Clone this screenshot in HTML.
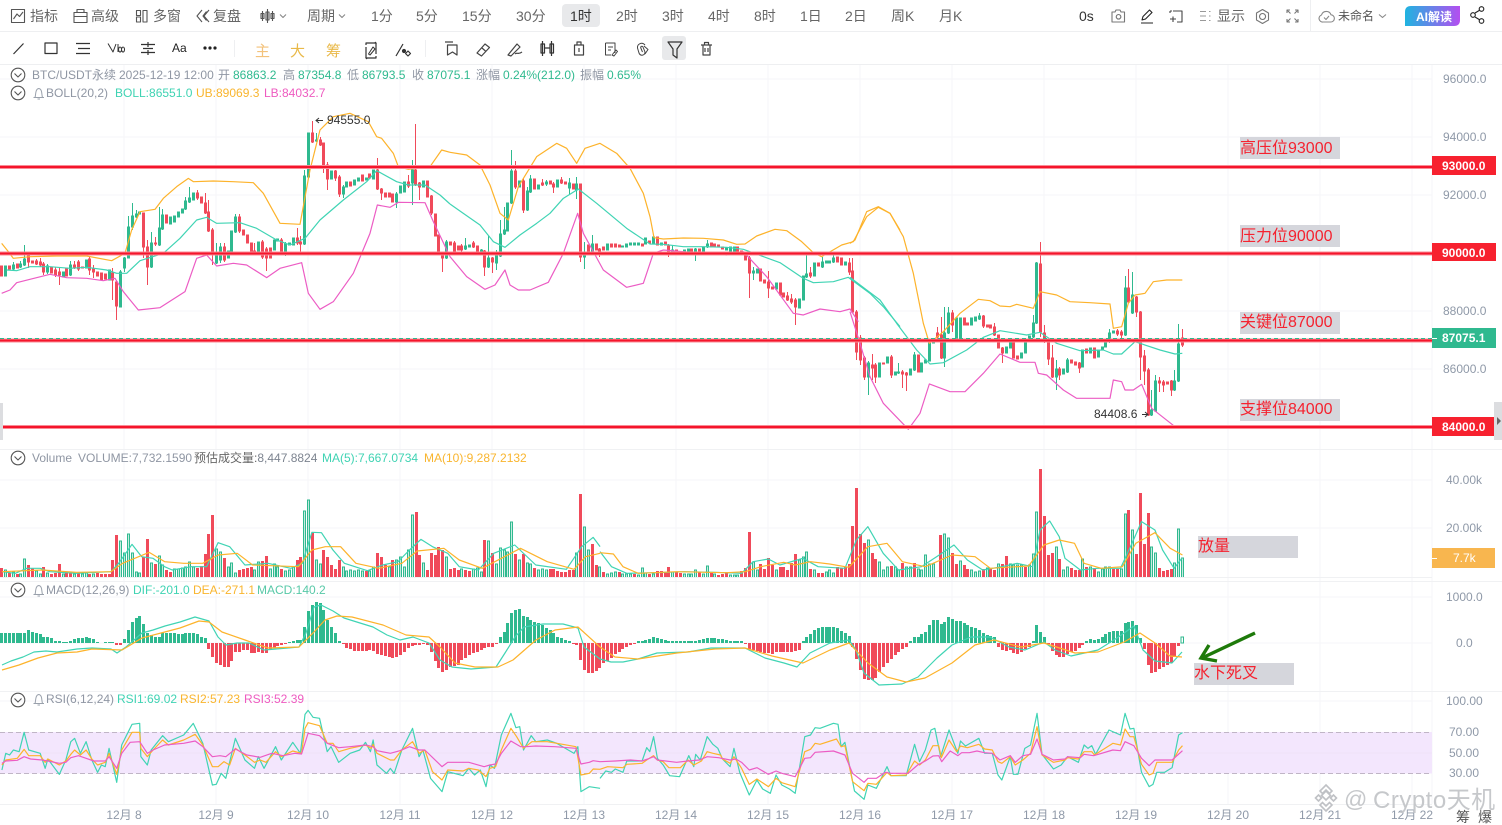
<!DOCTYPE html>
<html lang="zh"><head><meta charset="utf-8"><title>BTC/USDT</title>
<style>
html,body{margin:0;padding:0;background:#fff;width:1502px;height:825px;overflow:hidden}
svg{display:block;font-family:"Liberation Sans","Noto Sans CJK SC",sans-serif;font-size:12px}
.l{fill:none;stroke-width:1.2;vector-effect:non-scaling-stroke;stroke-linejoin:round}
.t{stroke:#40d4b4}.o{stroke:#fdb32b}.p{stroke:#ec5cc4}
.g{fill:#2fb98f;stroke:#2fb98f;stroke-width:1}.r{fill:#f04a5a;stroke:#f04a5a;stroke-width:1}
.i{fill:none;stroke:#555;stroke-width:1.1;stroke-linejoin:round}
.d{fill:none;stroke:#333;stroke-width:1.2;stroke-linejoin:round}
.c{fill:#666;font-size:14px}.m{fill:#8f96a3}.a{fill:#8f99a8}
.tg{fill:#2fb98f}.tt{fill:#3fd3b3}.to{fill:#f9b52e}.tp{fill:#ee5bc0}
.n{fill:#f5222f;font-size:16px}.w{fill:#fff;font-weight:bold}
</style></head><body>
<svg width="1502" height="825" viewBox="0 0 1502 825" xmlns="http://www.w3.org/2000/svg">
<!-- grid -->
<path d="M0 79H1432M0 137H1432M0 195H1432M0 311H1432M0 369H1432M0 480H1432M0 528H1432M0 597H1432M0 643H1432M0 701H1432M124 65V804M216 65V804M308 65V804M400 65V804M492 65V804M584 65V804M676 65V804M768 65V804M860 65V804M952 65V804M1044 65V804M1136 65V804M1228 65V804M1320 65V804M1412 65V804M1432 65V804" stroke="#f5f6f8" fill="none"/>
<path d="M0 577.5H1432M0 581.5H1502M0 691.5H1502M0 804.5H1432M0 449.5H1502" stroke="#f0f1f3" fill="none"/>
<!-- RSI band -->
<rect x="0" y="732" width="1432" height="41.5" fill="#f3e6fd"/>
<path d="M0 753H1432" stroke="#efe2f8"/>
<path d="M0 732.5H1432M0 773.5H1432" stroke="#c0b5c6" stroke-dasharray="5 3" fill="none"/>
<!-- candles -->
<g>
<path class="r" d="M.5 266h2V276h-2z"/><path class="g" d="M4.5 266h2V276h-2z"/><path class="r" d="M8.5 266h2V269h-2z"/><path class="g" d="M12.5 265h2V269h-2zM13.5 262V271"/><path class="r" d="M16.5 264h2V268h-2z"/><path class="g" d="M19.5 264h2V267h-2zM20.5 261V268M23.5 259h2V265h-2zM24.5 245V266"/>
<path class="r" d="M27.5 254h2V262h-2zM28.5 252V268M31.5 261h2V263h-2zM35.5 261h2V264h-2zM36.5 259V265M39.5 262h2V265h-2zM40.5 258V267M42.5 264h2V272h-2zM43.5 262V275"/><path class="g" d="M46.5 266h2V272h-2zM47.5 264V274"/>
<path class="r" d="M50.5 267h2V273h-2zM54.5 270h2V275h-2zM55.5 267V277M58.5 272h2V275h-2zM59.5 268V285"/><path class="g" d="M62.5 272h2V277h-2z"/><path class="r" d="M65.5 268h2V276h-2z"/><path class="g" d="M69.5 265h2V275h-2zM70.5 261V276"/><path class="r" d="M73.5 265h2V268h-2zM74.5 261V269M77.5 262h2V269h-2zM78.5 260V271M81.5 267h2V268h-2z"/><path class="g" d="M85.5 260h2V268h-2z"/>
<path class="r" d="M88.5 259h2V270h-2zM89.5 257V275M92.5 269h2V272h-2zM93.5 265V278M96.5 272h2V276h-2zM100.5 273h2V280h-2zM104.5 274h2V279h-2z"/><path class="g" d="M108.5 270h2V280h-2z"/><path class="r" d="M111.5 273h2V280h-2zM112.5 268V300M115.5 282h2V306h-2zM116.5 280V320"/>
<path class="g" d="M119.5 272h2V307h-2zM120.5 270V307M123.5 258h2V268h-2zM124.5 257V272M127.5 227h2V258h-2zM128.5 216V258M131.5 216h2V227h-2zM132.5 203V230M135.5 214h2V217h-2zM136.5 210V218M138.5 212h2V214h-2z"/>
<path class="r" d="M142.5 213h2V247h-2zM143.5 213V258M146.5 247h2V267h-2zM147.5 240V285"/><path class="g" d="M150.5 243h2V267h-2zM151.5 232V268"/><path class="r" d="M154.5 243h2V244h-2zM155.5 237V246"/>
<path class="g" d="M158.5 228h2V245h-2zM159.5 207V246M161.5 215h2V229h-2zM162.5 209V230"/><path class="r" d="M165.5 215h2V223h-2z"/><path class="g" d="M169.5 217h2V224h-2zM173.5 216h2V222h-2zM177.5 212h2V217h-2zM181.5 209h2V213h-2zM184.5 201h2V209h-2zM185.5 197V210M188.5 198h2V202h-2zM189.5 187V203M192.5 193h2V200h-2z"/>
<path class="r" d="M196.5 193h2V198h-2zM197.5 190V200M200.5 197h2V203h-2zM204.5 203h2V213h-2zM205.5 193V214M207.5 212h2V231h-2zM208.5 200V232M211.5 230h2V255h-2zM212.5 228V265"/>
<path class="g" d="M215.5 253h2V263h-2zM216.5 243V264M219.5 247h2V260h-2zM220.5 243V263"/><path class="r" d="M223.5 247h2V260h-2zM224.5 243V262"/><path class="g" d="M227.5 251h2V258h-2zM230.5 231h2V252h-2zM234.5 217h2V232h-2zM235.5 214V233"/><path class="r" d="M238.5 217h2V231h-2zM239.5 214V233M242.5 230h2V235h-2zM246.5 235h2V243h-2zM250.5 243h2V253h-2zM253.5 251h2V253h-2zM254.5 243V255"/><path class="g" d="M257.5 242h2V253h-2z"/><path class="r" d="M261.5 242h2V257h-2zM262.5 240V259M265.5 249h2V258h-2zM266.5 247V271M269.5 248h2V258h-2z"/>
<path class="g" d="M273.5 240h2V250h-2zM276.5 239h2V241h-2z"/><path class="r" d="M280.5 240h2V251h-2zM281.5 238V253"/><path class="g" d="M284.5 244h2V252h-2zM285.5 242V256M288.5 243h2V245h-2zM292.5 238h2V245h-2z"/><path class="r" d="M296.5 238h2V243h-2zM297.5 228V245M299.5 242h2V244h-2zM300.5 236V253"/>
<path class="g" d="M303.5 176h2V244h-2zM304.5 170V245M307.5 133h2V177h-2z"/><path class="r" d="M311.5 133h2V142h-2zM312.5 121V143"/><path class="g" d="M315.5 140h2V141h-2zM316.5 133V142"/><path class="r" d="M319.5 140h2V145h-2zM320.5 137V146M322.5 143h2V165h-2zM323.5 143V173M326.5 165h2V179h-2zM327.5 162V190"/><path class="g" d="M330.5 171h2V179h-2z"/><path class="r" d="M334.5 171h2V178h-2zM335.5 170V181M338.5 177h2V194h-2zM339.5 175V197"/>
<path class="g" d="M342.5 187h2V194h-2zM343.5 185V198M345.5 182h2V187h-2z"/><path class="r" d="M349.5 182h2V186h-2z"/><path class="g" d="M353.5 180h2V185h-2zM357.5 178h2V181h-2z"/><path class="r" d="M361.5 175h2V181h-2z"/><path class="g" d="M365.5 178h2V180h-2z"/><path class="r" d="M368.5 174h2V178h-2z"/><path class="g" d="M372.5 170h2V179h-2z"/>
<path class="r" d="M376.5 170h2V189h-2zM377.5 158V190M380.5 189h2V193h-2zM381.5 188V200M384.5 193h2V197h-2zM388.5 193h2V197h-2zM391.5 194h2V202h-2z"/><path class="g" d="M395.5 194h2V202h-2zM396.5 192V208M399.5 186h2V193h-2zM403.5 182h2V192h-2z"/><path class="r" d="M407.5 182h2V186h-2zM408.5 175V188"/><path class="g" d="M411.5 170h2V183h-2zM412.5 160V205"/><path class="r" d="M414.5 170h2V185h-2zM415.5 124V186M418.5 183h2V187h-2zM419.5 182V200"/><path class="g" d="M422.5 181h2V187h-2z"/>
<path class="r" d="M426.5 181h2V197h-2zM430.5 196h2V213h-2zM431.5 195V215M434.5 214h2V236h-2zM437.5 235h2V253h-2zM441.5 253h2V258h-2zM442.5 252V272"/><path class="g" d="M445.5 242h2V258h-2zM446.5 240V259"/><path class="r" d="M449.5 242h2V245h-2zM453.5 243h2V253h-2zM454.5 241V255M457.5 246h2V250h-2zM460.5 246h2V250h-2zM461.5 244V254"/>
<path class="g" d="M464.5 246h2V249h-2zM465.5 238V250M468.5 245h2V247h-2z"/><path class="r" d="M472.5 243h2V247h-2zM473.5 241V248M476.5 246h2V253h-2z"/><path class="g" d="M480.5 250h2V253h-2zM481.5 249V255"/><path class="r" d="M483.5 251h2V267h-2zM484.5 250V276"/><path class="g" d="M487.5 258h2V267h-2zM488.5 236V268"/><path class="r" d="M491.5 258h2V262h-2zM492.5 257V273"/>
<path class="g" d="M495.5 254h2V263h-2zM496.5 250V270M499.5 234h2V256h-2zM500.5 220V257M503.5 230h2V234h-2zM504.5 207V235M506.5 203h2V231h-2zM510.5 171h2V203h-2zM511.5 150V204"/><path class="r" d="M514.5 171h2V187h-2zM515.5 161V189"/><path class="g" d="M518.5 181h2V187h-2z"/><path class="r" d="M522.5 181h2V210h-2zM523.5 178V213"/><path class="g" d="M526.5 191h2V210h-2zM527.5 187V211M529.5 179h2V192h-2zM530.5 175V193"/><path class="r" d="M533.5 179h2V189h-2z"/><path class="g" d="M537.5 185h2V189h-2z"/><path class="r" d="M541.5 183h2V185h-2zM542.5 179V186"/><path class="g" d="M545.5 182h2V184h-2zM546.5 180V186"/>
<path class="r" d="M549.5 181h2V184h-2zM552.5 184h2V187h-2zM553.5 182V193"/><path class="g" d="M556.5 180h2V187h-2z"/><path class="r" d="M560.5 180h2V183h-2zM561.5 177V184M564.5 182h2V184h-2z"/><path class="g" d="M568.5 183h2V188h-2zM569.5 178V194"/><path class="r" d="M572.5 184h2V189h-2z"/><path class="g" d="M575.5 184h2V190h-2zM576.5 177V199"/>
<path class="r" d="M579.5 184h2V257h-2zM580.5 184V262"/><path class="g" d="M583.5 253h2V257h-2zM584.5 242V269"/><path class="r" d="M587.5 245h2V252h-2z"/><path class="g" d="M591.5 244h2V252h-2zM592.5 235V253"/><path class="r" d="M595.5 244h2V250h-2zM598.5 249h2V251h-2zM599.5 248V257M602.5 247h2V250h-2z"/><path class="g" d="M606.5 244h2V250h-2z"/><path class="r" d="M610.5 244h2V247h-2zM614.5 244h2V247h-2zM618.5 245h2V247h-2z"/><path class="g" d="M621.5 246h2V247h-2zM625.5 244h2V247h-2zM629.5 243h2V245h-2zM633.5 243h2V245h-2zM637.5 243h2V245h-2z"/><path class="r" d="M641.5 244h2V246h-2z"/><path class="g" d="M644.5 238h2V244h-2z"/><path class="r" d="M648.5 241h2V243h-2z"/><path class="g" d="M652.5 237h2V243h-2z"/><path class="r" d="M656.5 237h2V245h-2z"/><path class="g" d="M660.5 243h2V245h-2z"/><path class="r" d="M664.5 242h2V245h-2zM667.5 246h2V254h-2zM668.5 244V257"/>
<path class="g" d="M671.5 250h2V253h-2zM672.5 245V254"/><path class="r" d="M675.5 250h2V253h-2zM679.5 252h2V253h-2z"/><path class="g" d="M683.5 250h2V253h-2zM687.5 249h2V252h-2z"/><path class="r" d="M690.5 249h2V252h-2z"/><path class="g" d="M694.5 249h2V252h-2zM695.5 248V261"/><path class="r" d="M698.5 249h2V252h-2z"/><path class="g" d="M702.5 247h2V252h-2zM706.5 244h2V247h-2zM707.5 240V248"/><path class="r" d="M710.5 243h2V247h-2zM713.5 244h2V247h-2zM717.5 245h2V247h-2zM721.5 247h2V249h-2z"/><path class="g" d="M725.5 248h2V250h-2zM729.5 247h2V251h-2zM733.5 247h2V251h-2z"/><path class="r" d="M736.5 247h2V252h-2zM740.5 251h2V253h-2zM744.5 253h2V260h-2zM748.5 258h2V273h-2zM749.5 256V298"/>
<path class="g" d="M752.5 271h2V273h-2zM753.5 267V280M756.5 269h2V273h-2z"/><path class="r" d="M759.5 269h2V281h-2zM763.5 280h2V283h-2zM767.5 282h2V288h-2zM768.5 271V298M771.5 287h2V289h-2z"/><path class="g" d="M775.5 283h2V289h-2z"/><path class="r" d="M779.5 283h2V295h-2zM782.5 293h2V297h-2zM786.5 296h2V300h-2zM787.5 292V301M790.5 299h2V302h-2zM791.5 294V304M794.5 300h2V307h-2zM795.5 298V325"/><path class="g" d="M798.5 299h2V308h-2zM802.5 276h2V300h-2zM805.5 274h2V277h-2zM806.5 254V278"/><path class="r" d="M809.5 273h2V276h-2zM810.5 267V278"/><path class="g" d="M813.5 263h2V276h-2z"/><path class="r" d="M817.5 263h2V266h-2z"/><path class="g" d="M821.5 262h2V267h-2zM822.5 257V268M825.5 261h2V263h-2zM828.5 261h2V263h-2zM832.5 258h2V262h-2zM833.5 254V263"/>
<path class="r" d="M836.5 257h2V262h-2zM840.5 258h2V265h-2z"/><path class="g" d="M844.5 262h2V265h-2z"/><path class="r" d="M848.5 263h2V272h-2zM849.5 258V275M851.5 271h2V312h-2zM852.5 258V313M855.5 312h2V352h-2zM856.5 310V360M859.5 338h2V360h-2zM860.5 335V365M863.5 358h2V377h-2zM864.5 356V380"/><path class="g" d="M867.5 363h2V377h-2zM868.5 361V395"/><path class="r" d="M871.5 365h2V368h-2zM872.5 354V380M874.5 365h2V377h-2zM875.5 363V383"/><path class="g" d="M878.5 363h2V377h-2z"/><path class="r" d="M882.5 363h2V364h-2z"/><path class="g" d="M886.5 357h2V363h-2z"/><path class="r" d="M890.5 357h2V375h-2zM891.5 355V378"/><path class="g" d="M894.5 372h2V375h-2zM897.5 372h2V373h-2zM898.5 363V374"/><path class="r" d="M901.5 372h2V374h-2zM902.5 370V388M905.5 373h2V375h-2zM906.5 372V391"/>
<path class="g" d="M909.5 369h2V375h-2zM913.5 355h2V370h-2zM914.5 352V371"/><path class="r" d="M917.5 355h2V372h-2z"/><path class="g" d="M920.5 363h2V372h-2zM924.5 360h2V363h-2zM928.5 343h2V361h-2zM932.5 342h2V343h-2z"/><path class="r" d="M936.5 333h2V337h-2zM937.5 327V339M940.5 335h2V358h-2zM941.5 317V359"/><path class="g" d="M943.5 333h2V358h-2zM944.5 307V367M947.5 313h2V333h-2zM948.5 307V334"/><path class="r" d="M951.5 313h2V325h-2zM952.5 310V332"/><path class="g" d="M955.5 318h2V338h-2zM959.5 318h2V338h-2z"/><path class="r" d="M963.5 318h2V325h-2zM966.5 323h2V325h-2z"/><path class="g" d="M970.5 318h2V325h-2zM974.5 317h2V321h-2zM978.5 316h2V319h-2zM979.5 313V320"/><path class="r" d="M982.5 316h2V326h-2zM983.5 315V328M986.5 325h2V327h-2zM989.5 325h2V328h-2zM993.5 327h2V335h-2zM994.5 323V336M997.5 335h2V348h-2zM1001.5 348h2V353h-2zM1002.5 347V363"/>
<path class="g" d="M1005.5 347h2V353h-2zM1009.5 340h2V348h-2z"/><path class="r" d="M1012.5 340h2V358h-2zM1016.5 356h2V359h-2z"/><path class="g" d="M1020.5 353h2V358h-2zM1024.5 341h2V353h-2zM1028.5 336h2V342h-2zM1032.5 323h2V337h-2zM1033.5 315V338M1035.5 263h2V323h-2zM1036.5 262V324"/><path class="r" d="M1039.5 264h2V332h-2zM1040.5 242V337M1043.5 333h2V342h-2zM1044.5 325V343M1047.5 339h2V359h-2zM1048.5 338V365M1051.5 358h2V377h-2zM1052.5 345V378"/><path class="g" d="M1055.5 369h2V377h-2zM1056.5 360V390"/><path class="r" d="M1058.5 369h2V375h-2zM1059.5 367V380"/><path class="g" d="M1062.5 369h2V374h-2zM1066.5 360h2V372h-2zM1067.5 358V373"/><path class="r" d="M1070.5 360h2V363h-2zM1074.5 362h2V365h-2zM1078.5 363h2V368h-2zM1079.5 362V373"/><path class="g" d="M1081.5 350h2V367h-2z"/><path class="r" d="M1085.5 349h2V353h-2z"/><path class="g" d="M1089.5 348h2V353h-2z"/><path class="r" d="M1093.5 348h2V358h-2z"/><path class="g" d="M1097.5 350h2V357h-2zM1101.5 347h2V350h-2zM1104.5 342h2V347h-2zM1108.5 333h2V342h-2zM1109.5 329V343M1112.5 331h2V333h-2z"/><path class="r" d="M1116.5 331h2V334h-2zM1117.5 329V336M1120.5 332h2V335h-2zM1121.5 330V338"/>
<path class="g" d="M1124.5 288h2V335h-2zM1125.5 276V336"/><path class="r" d="M1127.5 288h2V302h-2zM1128.5 269V303"/><path class="g" d="M1131.5 295h2V313h-2zM1132.5 272V314"/><path class="r" d="M1135.5 297h2V312h-2zM1136.5 296V317M1139.5 312h2V357h-2zM1140.5 311V380M1143.5 356h2V371h-2zM1144.5 350V385M1147.5 370h2V415h-2zM1148.5 368V416"/><path class="g" d="M1150.5 410h2V415h-2zM1151.5 390V416M1154.5 381h2V411h-2zM1155.5 375V412"/><path class="r" d="M1158.5 381h2V383h-2zM1159.5 377V392M1162.5 382h2V385h-2zM1163.5 380V392M1166.5 382h2V384h-2zM1170.5 381h2V390h-2zM1171.5 380V396"/><path class="g" d="M1173.5 381h2V390h-2zM1174.5 370V391M1177.5 344h2V381h-2zM1178.5 324V382"/><path class="r" d="M1181.5 338h2V345h-2zM1182.5 329V347"/>
</g>
<!-- BOLL -->
<g transform="translate(0 110) scale(.33333)">
<polyline class="l o" points="5,400 25,425 40,445 90,440 170,438 260,438 335,452 375,430 395,360 420,305 465,298 490,265 530,230 565,205 580,215 640,213 700,215 760,218 790,250 840,340 900,343 930,180 960,60 1000,20 1050,10 1105,35 1130,80 1145,85 1180,130 1195,170 1225,178 1290,170 1325,120 1350,127"/>
<polyline class="l t" points="20,480 50,482 90,470 150,470 210,475 260,472 320,480 350,490 380,490 420,452 490,430 540,385 590,330 620,322 650,340 720,338 770,355 830,390 870,405 915,385 960,330 1030,270 1100,215 1130,182 1190,215 1225,225 1275,225 1320,255 1350,282"/>
<polyline class="l p" points="5,550 30,540 50,518 90,508 150,493 200,503 260,505 310,512 345,505 370,545 415,600 480,593 555,545 590,445 620,435 650,468 700,460 740,465 800,503 840,475 905,458 925,550 960,598 1000,575 1060,490 1110,370 1132,285 1170,292 1195,277 1275,278 1300,335 1350,440"/>
</g>
<g transform="translate(450 110) scale(.33333)">
<polyline class="l o" points="0,127 50,135 90,165 120,225 150,310 175,330 205,230 260,140 320,100 350,115 380,160 405,115 450,100 500,130 540,175 580,250 600,320 612,383 640,387 700,384 760,385 820,390 860,403 885,402 920,378 975,358 1010,362 1055,395 1090,428 1115,440 1175,405 1210,395 1250,320 1285,292 1320,310 1350,360"/>
<polyline class="l t" points="0,282 40,310 90,345 130,395 165,412 210,375 260,340 300,310 340,265 385,237 440,280 530,355 600,402 640,403 700,410 760,410 830,412 880,418 990,458 1060,505 1090,518 1150,515 1195,502 1260,550 1300,590 1350,650"/>
<polyline class="l p" points="0,440 50,500 105,538 135,525 165,480 180,525 205,540 240,540 295,517 340,430 383,310 400,370 460,480 530,532 580,520 610,430 640,420 700,425 760,430 830,435 880,425 950,500 1030,610 1060,615 1110,597 1170,605 1200,597 1225,635"/>
</g>
<g transform="translate(850 200) scale(.33333)">
<polyline class="l o" points="0,130 15,120 50,35 85,20 120,40 160,110 190,220 220,370 238,430 280,395 330,340 385,298 420,302 450,318 480,320 500,313 550,325 570,275 620,285 660,305 720,308 780,312 790,385 815,380 835,310 855,285 885,280 910,245 950,240 997,240"/>
<polyline class="l t" points="0,232 50,270 90,300 140,370 200,450 240,492 280,488 350,450 400,412 450,392 530,405 570,397 620,430 690,452 760,450 790,462 815,462 855,425 930,450 975,462 997,460"/>
<polyline class="l p" points="0,335 30,430 60,530 100,610 175,688 210,640 238,552 300,575 345,575 400,520 450,462 510,487 555,487 565,520 590,525 640,570 680,595 780,595 790,540 815,545 825,570 850,570 875,553 905,625 975,680 997,680"/>
</g>
<!-- horizontal levels -->
<path d="M0 167H1432M0 253.5H1432M0 340.5H1432M0 427H1432" stroke="#f98b95" stroke-width="4" fill="none"/>
<path d="M0 167H1432M0 253.5H1432M0 340.5H1432M0 427H1432" stroke="#f5152b" stroke-width="2" fill="none"/>
<path d="M0 338.5H1432" stroke="#2fb98f" stroke-dasharray="4 3" fill="none"/>
<!-- annotation boxes -->
<g fill="#d5d6dc"><rect x="1240" y="137" width="100" height="22"/><rect x="1240" y="225" width="100" height="22"/><rect x="1240" y="312" width="100" height="22"/><rect x="1240" y="399" width="100" height="22"/><rect x="1198" y="536" width="100" height="22"/><rect x="1194" y="663" width="100" height="22"/></g>
<g class="n"><text x="1240" y="153">高压位93000</text><text x="1240" y="241">压力位90000</text><text x="1240" y="327">关键位87000</text><text x="1240" y="414">支撑位84000</text><text x="1198" y="551">放量</text><text x="1194" y="678">水下死叉</text></g>
<path d="M1255 633L1202 658M1209 645L1201 658L1217 661" fill="none" stroke="#1e7a0a" stroke-width="3.4"/>
<!-- tags -->
<rect x="1432" y="156" width="64" height="19" fill="#f7212f"/><rect x="1432" y="243" width="64" height="18" fill="#f7212f"/><rect x="1432" y="328" width="64" height="20" fill="#2fb98f"/><rect x="1432" y="417" width="64" height="19" fill="#f7212f"/><rect x="1432" y="548" width="63" height="20" fill="#f8b64f"/>
<g class="w"><text x="1442" y="170">93000.0</text><text x="1442" y="257">90000.0</text><text x="1442" y="342">87075.1</text><text x="1442" y="431">84000.0</text></g>
<path d="M1432 338.5h5M1432 558.5h5" stroke="#fff"/>
<text x="1453" y="562" fill="#fff">7.7k</text>
<!-- right axis -->
<g class="a"><text x="1443" y="83">96000.0</text><text x="1443" y="141">94000.0</text><text x="1443" y="199">92000.0</text><text x="1443" y="315">88000.0</text><text x="1443" y="373">86000.0</text><text x="1446" y="484">40.00k</text><text x="1446" y="532">20.00k</text><text x="1446" y="601">1000.0</text><text x="1456" y="647">0.0</text><text x="1446" y="705">100.00</text><text x="1449" y="736">70.00</text><text x="1449" y="757">50.00</text><text x="1449" y="777">30.00</text></g>
<!-- volume -->
<path fill="none" stroke="#f04a5a" stroke-width="3" d="M1.5 577V568M9.5 577V573M17.5 577V574M28.5 577V565M32.5 577V568M43.5 577V567M51.5 577V574M55.5 577V573M59.5 577V564M66.5 577V572M70.5 577V573M78.5 577V573M89.5 577V574M97.5 577V573M101.5 577V574M105.5 577V574M109.5 577V574M112.5 577V560M116.5 577V535M143.5 577V557M147.5 577V539M155.5 577V564M166.5 577V570M170.5 577V572M197.5 577V568M201.5 577V566M205.5 577V554M208.5 577V534M212.5 577V515M224.5 577V558M239.5 577V570M243.5 577V569M247.5 577V568M251.5 577V567M262.5 577V561M266.5 577V556M281.5 577V569M297.5 577V560M300.5 577V557M312.5 577V533M323.5 577V550M327.5 577V557M331.5 577V565M335.5 577V569M339.5 577V560M366.5 577V571M377.5 577V553M381.5 577V557M385.5 577V565M392.5 577V560M416.5 577V512M419.5 577V555M427.5 577V570M431.5 577V553M435.5 577V555M438.5 577V547M442.5 577V550M450.5 577V569M454.5 577V568M458.5 577V570M465.5 577V570M469.5 577V571M484.5 577V540M492.5 577V553M515.5 577V554M523.5 577V554M534.5 577V568M550.5 577V569M553.5 577V569M557.5 577V571M561.5 577V572M565.5 577V572M569.5 577V570M573.5 577V570M580.5 577V494M592.5 577V544M596.5 577V565M603.5 577V572M619.5 577V572M634.5 577V574M649.5 577V574M657.5 577V571M661.5 577V571M665.5 577V572M668.5 577V567M676.5 577V572M680.5 577V573M699.5 577V572M711.5 577V573M718.5 577V575M722.5 577V574M726.5 577V572M741.5 577V571M745.5 577V568M749.5 577V532M760.5 577V564M764.5 577V569M768.5 577V558M772.5 577V565M780.5 577V567M783.5 577V567M787.5 577V570M791.5 577V563M795.5 577V554M810.5 577V569M818.5 577V573M822.5 577V573M837.5 577V567M841.5 577V568M845.5 577V567M849.5 577V564M852.5 577V526M856.5 577V488M860.5 577V534M864.5 577V543M872.5 577V553M875.5 577V559M891.5 577V566M902.5 577V563M914.5 577V563M940.5 577V535M952.5 577V553M956.5 577V564M964.5 577V565M967.5 577V569M983.5 577V569M990.5 577V568M994.5 577V570M1002.5 577V564M1006.5 577V556M1025.5 577V567M1040.5 577V469M1044.5 577V516M1048.5 577V555M1052.5 577V553M1059.5 577V559M1071.5 577V568M1075.5 577V570M1079.5 577V570M1086.5 577V567M1094.5 577V568M1113.5 577V569M1117.5 577V569M1128.5 577V510M1136.5 577V554M1140.5 577V493M1144.5 577V544M1148.5 577V513M1159.5 577V568M1163.5 577V571M1167.5 577V570M1171.5 577V569"/>
<path fill="#2fb98f" fill-opacity=".28" stroke="#2fb98f" d="M4.5 577V570h2V577M12.5 577V572h2V577M19.5 577V574h2V577M23.5 577V559h2V577M35.5 577V571h2V577M39.5 577V574h2V577M46.5 577V573h2V577M62.5 577V574h2V577M73.5 577V574h2V577M81.5 577V574h2V577M85.5 577V573h2V577M92.5 577V574h2V577M119.5 577V541h2V577M123.5 577V553h2V577M127.5 577V534h2V577M131.5 577V553h2V577M135.5 577V572h2V577M138.5 577V573h2V577M150.5 577V563h2V577M158.5 577V556h2V577M161.5 577V565h2V577M173.5 577V569h2V577M177.5 577V569h2V577M181.5 577V568h2V577M184.5 577V567h2V577M188.5 577V562h2V577M192.5 577V567h2V577M215.5 577V549h2V577M219.5 577V552h2V577M227.5 577V567h2V577M230.5 577V563h2V577M234.5 577V573h2V577M253.5 577V570h2V577M257.5 577V562h2V577M269.5 577V569h2V577M273.5 577V564h2V577M276.5 577V567h2V577M284.5 577V571h2V577M288.5 577V570h2V577M292.5 577V567h2V577M303.5 577V511h2V577M307.5 577V500h2V577M315.5 577V560h2V577M319.5 577V564h2V577M342.5 577V567h2V577M345.5 577V571h2V577M349.5 577V570h2V577M353.5 577V571h2V577M357.5 577V570h2V577M361.5 577V571h2V577M368.5 577V571h2V577M372.5 577V567h2V577M388.5 577V567h2V577M395.5 577V560h2V577M399.5 577V557h2V577M403.5 577V567h2V577M407.5 577V550h2V577M411.5 577V515h2V577M422.5 577V563h2V577M445.5 577V557h2V577M460.5 577V569h2V577M472.5 577V569h2V577M476.5 577V568h2V577M480.5 577V572h2V577M487.5 577V541h2V577M495.5 577V564h2V577M499.5 577V548h2V577M503.5 577V550h2V577M506.5 577V552h2V577M510.5 577V522h2V577M518.5 577V560h2V577M526.5 577V563h2V577M529.5 577V564h2V577M537.5 577V570h2V577M541.5 577V569h2V577M545.5 577V570h2V577M575.5 577V553h2V577M583.5 577V527h2V577M587.5 577V550h2V577M598.5 577V567h2V577M606.5 577V574h2V577M610.5 577V573h2V577M614.5 577V572h2V577M621.5 577V574h2V577M625.5 577V574h2V577M629.5 577V574h2V577M637.5 577V575h2V577M641.5 577V568h2V577M644.5 577V573h2V577M652.5 577V574h2V577M671.5 577V572h2V577M683.5 577V574h2V577M687.5 577V574h2V577M690.5 577V574h2V577M694.5 577V570h2V577M702.5 577V574h2V577M706.5 577V566h2V577M713.5 577V574h2V577M729.5 577V575h2V577M733.5 577V575h2V577M736.5 577V575h2V577M752.5 577V562h2V577M756.5 577V570h2V577M775.5 577V570h2V577M798.5 577V560h2V577M802.5 577V557h2V577M805.5 577V552h2V577M813.5 577V570h2V577M825.5 577V572h2V577M828.5 577V570h2V577M832.5 577V573h2V577M867.5 577V540h2V577M878.5 577V562h2V577M882.5 577V570h2V577M886.5 577V567h2V577M894.5 577V567h2V577M897.5 577V570h2V577M905.5 577V567h2V577M909.5 577V567h2V577M917.5 577V569h2V577M920.5 577V570h2V577M924.5 577V555h2V577M928.5 577V564h2V577M932.5 577V564h2V577M943.5 577V534h2V577M947.5 577V538h2V577M959.5 577V561h2V577M970.5 577V570h2V577M974.5 577V572h2V577M978.5 577V571h2V577M986.5 577V568h2V577M997.5 577V564h2V577M1009.5 577V564h2V577M1012.5 577V565h2V577M1016.5 577V565h2V577M1020.5 577V565h2V577M1028.5 577V565h2V577M1032.5 577V554h2V577M1035.5 577V512h2V577M1055.5 577V547h2V577M1062.5 577V570h2V577M1066.5 577V567h2V577M1081.5 577V559h2V577M1089.5 577V567h2V577M1097.5 577V572h2V577M1101.5 577V569h2V577M1104.5 577V567h2V577M1108.5 577V567h2V577M1120.5 577V569h2V577M1124.5 577V514h2V577M1131.5 577V530h2V577M1150.5 577V547h2V577M1154.5 577V553h2V577M1173.5 577V563h2V577M1177.5 577V529h2V577M1181.5 577V558h2V577"/>
<g transform="translate(0 450) scale(.3827 .33333)">
<polyline class="l t" points="5,365 40,370 70,355 105,355 130,365 200,370 290,365 310,340 345,283 370,320 400,325 430,350 450,360 500,350 540,350 570,278 600,290 640,345 700,340 760,355 790,340 815,247 840,248 870,300 900,340 960,362 1000,345 1040,335 1070,300 1100,268 1130,290 1170,310 1200,350 1250,360 1290,310 1345,285 1400,345 1480,358 1520,290 1550,262 1568,290"/>
<polyline class="l o" points="5,365 110,360 200,367 290,365 320,340 390,307 430,335 480,340 530,340 570,315 620,310 660,345 780,350 815,300 850,290 890,290 930,340 990,355 1050,340 1090,303 1160,295 1200,330 1260,355 1310,325 1360,295 1430,335 1500,358 1530,320 1568,310"/>
</g>
<g transform="translate(600 450) scale(.3827 .33333)">
<polyline class="l t" points="0,305 30,350 70,370 150,368 220,365 300,367 370,370 400,335 440,327 470,345 530,325 570,350 640,355 670,270 700,230 740,310 780,360 840,350 880,320 925,285 960,330 1000,360 1050,350 1090,340 1130,350 1150,240 1175,213 1200,260 1215,325 1255,360 1300,355 1360,355 1390,280 1415,215 1450,240 1470,300 1500,355 1520,325"/>
<polyline class="l o" points="0,308 35,312 60,350 100,370 200,365 330,368 380,365 420,350 480,337 510,345 550,335 600,342 650,352 700,290 750,280 790,335 850,350 920,315 980,320 1020,355 1120,348 1160,285 1200,270 1240,280 1265,340 1310,355 1365,350 1400,280 1450,248 1490,295 1522,315"/>
</g>
<!-- MACD -->
<path fill="none" stroke="#f04a5a" stroke-width="3" d="M116.5 643V645M120.5 643V645M208.5 643V649M212.5 643V657M216.5 643V663M220.5 643V665M224.5 643V667M228.5 643V667M231.5 643V661M235.5 643V652M239.5 643V652M243.5 643V650M247.5 643V650M251.5 643V653M254.5 643V653M258.5 643V652M262.5 643V653M266.5 643V653M270.5 643V650M274.5 643V648M277.5 643V646M281.5 643V645M285.5 643V644M343.5 643V644M346.5 643V648M350.5 643V649M354.5 643V651M358.5 643V651M362.5 643V651M366.5 643V651M369.5 643V650M373.5 643V651M377.5 643V654M381.5 643V655M385.5 643V656M389.5 643V657M392.5 643V658M396.5 643V657M400.5 643V655M404.5 643V652M408.5 643V648M412.5 643V646M415.5 643V645M419.5 643V645M423.5 643V644M427.5 643V645M431.5 643V652M435.5 643V661M438.5 643V668M442.5 643V672M446.5 643V670M450.5 643V667M454.5 643V666M458.5 643V665M461.5 643V660M465.5 643V658M469.5 643V655M473.5 643V653M477.5 643V652M481.5 643V650M484.5 643V648M488.5 643V647M492.5 643V647M496.5 643V644M573.5 643V644M576.5 643V645M580.5 643V660M584.5 643V670M588.5 643V673M592.5 643V673M596.5 643V671M599.5 643V668M603.5 643V663M607.5 643V661M611.5 643V658M615.5 643V654M619.5 643V652M622.5 643V649M626.5 643V647M630.5 643V645M634.5 643V644M745.5 643V644M749.5 643V649M753.5 643V650M757.5 643V651M760.5 643V652M764.5 643V653M768.5 643V653M772.5 643V654M776.5 643V652M780.5 643V652M783.5 643V652M787.5 643V652M791.5 643V652M795.5 643V651M799.5 643V650M852.5 643V647M856.5 643V659M860.5 643V670M864.5 643V679M868.5 643V680M872.5 643V680M875.5 643V678M879.5 643V672M883.5 643V667M887.5 643V663M891.5 643V659M895.5 643V655M898.5 643V652M902.5 643V649M906.5 643V647M998.5 643V647M1002.5 643V650M1006.5 643V651M1010.5 643V650M1013.5 643V653M1017.5 643V654M1021.5 643V652M1025.5 643V649M1029.5 643V647M1048.5 643V644M1052.5 643V651M1056.5 643V655M1059.5 643V657M1063.5 643V657M1067.5 643V654M1071.5 643V652M1075.5 643V651M1079.5 643V648M1082.5 643V645M1144.5 643V649M1148.5 643V665M1151.5 643V673M1155.5 643V672M1159.5 643V669M1163.5 643V667M1167.5 643V665M1171.5 643V663M1174.5 643V657M1178.5 643V646"/>
<path fill="none" stroke="#2fb98f" stroke-width="3" d="M1.5 643V633M5.5 643V633M9.5 643V633M13.5 643V633M17.5 643V633M20.5 643V633M24.5 643V633M28.5 643V630M32.5 643V632M36.5 643V633M40.5 643V634M43.5 643V637M47.5 643V637M51.5 643V638M55.5 643V641M59.5 643V641M63.5 643V642M66.5 643V642M70.5 643V641M74.5 643V639M78.5 643V638M82.5 643V638M86.5 643V637M89.5 643V638M93.5 643V639M97.5 643V642M105.5 643V642M109.5 643V642M112.5 643V642M124.5 643V639M128.5 643V630M132.5 643V622M136.5 643V618M139.5 643V616M143.5 643V624M147.5 643V633M151.5 643V635M155.5 643V637M159.5 643V637M162.5 643V633M166.5 643V633M170.5 643V633M174.5 643V633M178.5 643V634M182.5 643V634M185.5 643V633M189.5 643V633M193.5 643V633M197.5 643V634M201.5 643V637M205.5 643V638M289.5 643V642M293.5 643V641M297.5 643V640M300.5 643V640M304.5 643V627M308.5 643V611M312.5 643V605M316.5 643V602M320.5 643V603M323.5 643V610M327.5 643V620M331.5 643V627M335.5 643V633M339.5 643V641M500.5 643V637M504.5 643V632M507.5 643V623M511.5 643V613M515.5 643V610M519.5 643V609M523.5 643V616M527.5 643V617M530.5 643V620M534.5 643V622M538.5 643V623M542.5 643V625M546.5 643V628M550.5 643V630M553.5 643V633M557.5 643V637M561.5 643V638M565.5 643V640M569.5 643V641M638.5 643V641M642.5 643V641M645.5 643V640M649.5 643V639M653.5 643V637M657.5 643V638M661.5 643V639M665.5 643V640M668.5 643V641M672.5 643V641M676.5 643V641M680.5 643V641M684.5 643V641M688.5 643V641M691.5 643V641M695.5 643V641M699.5 643V640M703.5 643V639M707.5 643V638M711.5 643V638M714.5 643V638M718.5 643V639M722.5 643V639M726.5 643V640M730.5 643V641M734.5 643V641M737.5 643V641M741.5 643V641M803.5 643V641M806.5 643V637M810.5 643V634M814.5 643V630M818.5 643V628M822.5 643V627M826.5 643V627M829.5 643V627M833.5 643V627M837.5 643V628M841.5 643V631M845.5 643V633M849.5 643V636M910.5 643V641M914.5 643V637M918.5 643V637M921.5 643V634M925.5 643V632M929.5 643V625M933.5 643V620M937.5 643V620M941.5 643V624M944.5 643V622M948.5 643V617M952.5 643V619M956.5 643V621M960.5 643V621M964.5 643V623M967.5 643V625M971.5 643V627M975.5 643V628M979.5 643V630M983.5 643V633M987.5 643V635M990.5 643V636M994.5 643V637M1033.5 643V641M1036.5 643V625M1040.5 643V632M1044.5 643V637M1086.5 643V641M1090.5 643V639M1094.5 643V640M1098.5 643V639M1102.5 643V637M1105.5 643V634M1109.5 643V632M1113.5 643V631M1117.5 643V631M1121.5 643V631M1125.5 643V623M1128.5 643V622M1132.5 643V621M1136.5 643V625M1140.5 643V638"/>
<path fill="#fff" stroke="#2fb98f" d="M1181 643V637h2.5V643z"/>
<polyline class="l t" points="2,665 11,661 23,657 34,652 46,651 57,652 77,649 92,648 111,649 117,653 126,647 134,640 142,633 153,630 165,626 180,622 195,617 209,621 218,637 226,645 237,643 249,643 264,650 276,649 299,647 306,633 314,607 321,605 333,611 344,618 360,623 373,627 387,635 400,640 413,637 429,643 440,660 452,667 471,669 496,667 505,653 515,637 524,627 543,624 563,624 578,628 584,647 600,659 611,662 623,662 638,659 657,653 688,652 711,648 745,648 765,658 784,663 797,667 810,653 830,643 849,640 856,650 864,673 879,685 902,684 918,677 937,658 952,645 971,637 990,637 1009,647 1025,650 1044,642 1055,650 1071,656 1098,650 1117,638 1134,626 1143,650 1155,661 1172,663 1182,652"/>
<polyline class="l o" points="2,670 19,665 38,658 57,653 77,652 92,649 122,650 142,638 161,633 180,628 199,621 209,622 222,632 245,640 268,648 299,647 314,632 325,620 337,616 352,617 383,625 406,635 429,637 440,647 455,663 475,667 498,667 513,660 536,640 555,630 578,627 600,647 615,657 638,659 677,653 715,649 745,648 772,656 803,663 830,650 849,643 868,663 887,677 906,682 925,678 952,663 975,645 994,640 1021,647 1044,643 1075,653 1098,652 1124,642 1140,633 1155,643 1170,656 1182,657"/>
<!-- RSI -->
<g transform="translate(0 685) scale(.3827 .33333)">
<polyline class="l t" points="5,255 15,205 25,210 35,195 50,200 63,142 75,195 105,205 118,250 125,222 155,268 172,225 185,170 195,160 210,205 225,170 240,225 255,262 265,240 275,245 285,190 305,292 318,180 345,118 365,115 368,215 385,240 395,195 425,152 440,170 480,150 505,115 530,175 555,300 565,298 578,265 590,280 615,160 640,225 665,250 675,215 690,250 720,185 735,225 765,172 785,205 797,88 805,76 818,97 835,100 855,200 865,185 885,232 915,205 940,195 955,172 968,200 975,165 985,240 1010,265 1020,250 1030,265 1050,195 1078,130 1095,215 1105,195 1125,280 1155,320 1170,260 1210,272 1225,250 1240,270 1255,255 1270,305 1280,240 1292,250 1310,150 1335,85 1348,128 1358,125 1368,195 1388,152 1400,170 1430,165 1455,175 1500,205 1510,185 1518,320 1540,305 1568,310"/>
<polyline class="l o" points="5,240 15,225 45,220 63,193 75,212 105,212 118,232 125,222 155,240 172,228 185,208 195,195 210,210 225,195 240,222 255,240 275,232 285,205 305,268 318,195 345,142 365,142 368,190 385,215 400,195 425,165 440,180 480,165 510,148 530,180 555,245 570,245 585,230 600,240 615,190 640,210 665,232 680,225 695,232 720,200 735,215 765,198 788,205 797,130 805,113 835,122 855,175 870,175 885,200 915,190 955,180 970,190 975,178 985,205 1020,225 1030,225 1050,195 1078,170 1095,205 1110,195 1130,260 1155,285 1170,255 1210,258 1225,250 1250,255 1270,275 1280,250 1295,245 1310,195 1335,130 1350,155 1368,190 1390,170 1430,170 1470,178 1505,185 1518,270 1540,265 1550,252 1568,253"/>
<polyline class="l p" points="5,235 15,228 45,226 63,215 80,222 110,225 125,228 155,235 172,232 185,218 205,212 225,220 245,228 275,228 285,215 305,250 318,205 340,172 365,170 385,205 400,195 430,180 480,175 510,168 530,185 555,215 575,212 590,215 615,192 645,210 680,217 710,205 740,212 770,205 788,207 805,145 835,152 855,175 885,188 915,185 955,180 975,185 985,197 1020,205 1045,197 1070,185 1095,195 1110,195 1155,245 1170,232 1225,232 1265,245 1280,240 1295,237 1310,205 1335,168 1360,185 1375,185 1400,183 1450,185 1505,190 1518,237 1540,232 1550,227 1568,230"/>
</g>
<g transform="translate(600 685) scale(.3827 .33333)">
<polyline class="l t" points="0,280 15,258 30,262 40,252 60,262 70,228 110,228 122,188 130,200 140,155 150,220 165,240 182,272 208,275 232,212 245,245 250,208 262,225 280,155 295,178 308,190 320,222 340,245 350,190 365,262 390,330 410,285 425,312 445,325 460,270 475,300 495,312 510,325 535,155 550,150 562,128 575,130 610,115 622,118 630,185 640,172 665,318 690,343 700,300 722,310 750,245 760,272 800,272 822,178 835,230 850,195 865,135 875,130 890,215 912,135 935,205 942,168 955,183 990,160 1005,205 1025,205 1040,270 1050,285 1072,215 1080,268 1092,268 1110,190 1125,180 1142,85 1155,208 1185,252 1205,240 1222,215 1250,232 1265,180 1275,190 1285,182 1295,208 1330,135 1360,150 1372,85 1385,132 1395,130 1415,262 1435,305 1445,298 1455,262 1475,262 1495,248 1512,150 1522,143"/>
<polyline class="l o" points="0,253 20,245 60,248 70,238 110,235 122,225 140,212 150,225 165,230 180,248 210,248 230,225 245,240 265,228 280,200 295,205 315,210 320,222 340,235 350,215 370,250 390,298 410,282 440,305 460,280 475,293 510,305 535,200 550,193 562,175 575,178 618,162 630,185 640,182 660,290 690,317 700,295 722,298 750,262 760,272 800,270 822,228 835,240 850,225 870,182 885,182 892,218 912,165 932,200 942,183 960,188 990,178 1005,192 1025,195 1040,230 1050,235 1072,215 1085,240 1105,225 1125,205 1142,125 1155,210 1185,232 1215,225 1222,218 1250,222 1265,200 1285,200 1292,210 1340,175 1360,180 1372,132 1385,155 1395,155 1415,238 1435,270 1445,265 1455,232 1480,232 1495,232 1512,195 1522,182"/>
<polyline class="l p" points="0,230 40,228 80,225 110,228 125,222 140,215 150,225 200,232 230,228 260,225 280,215 310,218 340,225 355,222 370,232 390,255 410,248 440,268 460,258 475,265 510,275 535,220 550,218 562,202 610,198 640,210 660,265 690,292 700,280 722,280 745,262 760,265 805,265 830,240 850,228 870,213 885,212 893,230 915,198 935,212 945,203 965,203 985,198 1005,203 1025,205 1045,225 1072,212 1085,232 1105,212 1125,208 1142,162 1155,208 1185,225 1215,222 1222,215 1255,218 1265,208 1290,212 1340,195 1360,197 1372,170 1395,182 1415,220 1435,242 1450,225 1495,225 1522,197"/>
</g>
<!-- high/low markers -->
<path d="M323 120.500H316M319 118L316 120.500L319 123M1142 414.500H1148M1145 412L1148 414.500L1145 417" fill="none" stroke="#333"/>
<text x="327" y="124" fill="#333">94555.0</text><text x="1094" y="418" fill="#333">84408.6</text>
<!-- legends -->
<g class="i" stroke="#8f96a3"><circle cx="18" cy="75" r="6.800"/><path d="M14.500 73.500L18 77L21.500 73.500"/><circle cx="18" cy="93" r="6.800"/><path d="M14.500 91.500L18 95L21.500 91.500"/><circle cx="18" cy="458" r="6.800"/><path d="M14.500 456.500L18 460L21.500 456.500"/><circle cx="18" cy="590" r="6.800"/><path d="M14.500 588.500L18 592L21.500 588.500"/><circle cx="18" cy="700" r="6.800"/><path d="M14.500 698.500L18 702L21.500 698.500"/></g>
<g fill="none" stroke="#9aa1ac"><path id="b1" d="M33.500 97.500H44M35 97.500C36 95 35 89 38.800 88.500C42.500 89 41.500 95 42.500 97.500M37.500 99H40"/><path d="M33.500 594.500H44M35 594.500C36 592 35 586 38.800 585.500C42.500 586 41.500 592 42.500 594.500M37.500 596H40M33.500 703.500H44M35 703.500C36 701 35 695 38.800 694.500C42.500 695 41.500 701 42.500 703.500M37.500 705H40"/></g>
<text y="79" class="m"><tspan x="32">BTC/USDT永续</tspan><tspan x="119">2025-12-19 12:00</tspan><tspan x="218">开</tspan><tspan x="233" class="tg">86863.2</tspan><tspan x="283">高</tspan><tspan x="298" class="tg">87354.8</tspan><tspan x="347">低</tspan><tspan x="362" class="tg">86793.5</tspan><tspan x="412">收</tspan><tspan x="427" class="tg">87075.1</tspan><tspan x="476">涨幅</tspan><tspan x="503" class="tg">0.24%(212.0)</tspan><tspan x="580">振幅</tspan><tspan x="607" class="tg">0.65%</tspan></text>
<text y="97" class="m"><tspan x="46">BOLL(20,2)</tspan><tspan x="115" class="tt">BOLL:86551.0</tspan><tspan x="196" class="to">UB:89069.3</tspan><tspan x="264" class="tp">LB:84032.7</tspan></text>
<text y="462" class="m"><tspan x="32">Volume</tspan><tspan x="78">VOLUME:7,732.1590</tspan><tspan x="194" fill="#666">预估成交量:</tspan><tspan fill="#7d8490">8,447.8824</tspan><tspan x="322" class="tt">MA(5):7,667.0734</tspan><tspan x="424" class="to">MA(10):9,287.2132</tspan></text>
<text y="594" class="m"><tspan x="46">MACD(12,26,9)</tspan><tspan x="133" class="tt">DIF:-201.0</tspan><tspan x="193" class="to">DEA:-271.1</tspan><tspan x="257" fill="#58c9a8">MACD:140.2</tspan></text>
<text y="703" class="m"><tspan x="46">RSI(6,12,24)</tspan><tspan x="117" class="tt">RSI1:69.02</tspan><tspan x="180" class="to">RSI2:57.23</tspan><tspan x="244" class="tp">RSI3:52.39</tspan></text>
<!-- date axis -->
<g class="a" text-anchor="middle"><text x="124" y="819">12月 8</text><text x="216" y="819">12月 9</text><text x="308" y="819">12月 10</text><text x="400" y="819">12月 11</text><text x="492" y="819">12月 12</text><text x="584" y="819">12月 13</text><text x="676" y="819">12月 14</text><text x="768" y="819">12月 15</text><text x="860" y="819">12月 16</text><text x="952" y="819">12月 17</text><text x="1044" y="819">12月 18</text><text x="1136" y="819">12月 19</text><text x="1228" y="819">12月 20</text><text x="1320" y="819">12月 21</text><text x="1412" y="819">12月 22</text></g>
<!-- watermark -->
<g fill="#fff" stroke="#bfc1c5" stroke-width="1.6"><path d="M1326 791l4.500 4.500-4.500 4.500-4.500-4.500z"/><path d="M1315.500 798l3-3 3 3-3 3zM1330.500 798l3-3 3 3-3 3z"/><path d="M1326 785l6 6-2.500 2.500-3.500-3.500-3.500 3.500-2.500-2.500zM1326 811l6-6-2.500-2.500-3.500 3.500-3.500-3.500-2.500 2.500z"/></g>
<text x="1344" y="807" font-size="23" fill="#c6c8cb">@</text>
<text x="1373" y="808" font-size="24" fill="#c6c8cb" letter-spacing=".5">Crypto天机</text>
<text x="1456" y="822" font-size="14" fill="#555">筹</text><text x="1478" y="822" font-size="14" fill="#555">爆</text>
<!-- side handles -->
<rect x="0" y="403" width="3" height="37" fill="#dcdde0"/><rect x="1494" y="402" width="8" height="38" fill="#dcdde0"/><path d="M1497 417l4 4-4 4z" fill="#666"/>
<!-- toolbars -->
<rect x="0" y="0" width="1502" height="31" fill="#fff"/>
<path d="M0 31.500H1502M0 64.500H1502" stroke="#eeeff1"/>
<rect x="562" y="4" width="38" height="23" rx="4" fill="#e8e9eb"/>
<rect x="662" y="36" width="24" height="24" rx="3" fill="#e8e9eb"/>
<path d="M1310.500 0V31" stroke="#eeeff1"/>
<g class="c"><text x="30" y="21">指标</text><text x="91" y="21">高级</text><text x="153" y="21">多窗</text><text x="213" y="21">复盘</text><text x="307" y="21">周期</text><text x="371" y="21">1分</text><text x="416" y="21">5分</text><text x="462" y="21">15分</text><text x="516" y="21">30分</text><text x="570" y="21" fill="#333">1时</text><text x="616" y="21">2时</text><text x="662" y="21">3时</text><text x="708" y="21">4时</text><text x="754" y="21">8时</text><text x="800" y="21">1日</text><text x="845" y="21">2日</text><text x="891" y="21">周K</text><text x="939" y="21">月K</text><text x="1079" y="21" fill="#333">0s</text><text x="1217" y="21">显示</text></g>
<text x="1338" y="20" fill="#555">未命名</text>
<defs><linearGradient id="ai" x1="0" x2="1"><stop offset="0" stop-color="#1fb4e0"/><stop offset="1" stop-color="#b44ef0"/></linearGradient></defs>
<path d="M1411 6H1460V20Q1460 26 1454 26H1405V12Q1405 6 1411 6z" fill="url(#ai)"/>
<text x="1416" y="21" fill="#fff" font-weight="bold">AI解读</text>
<g class="i">
<rect x="11.500" y="9.500" width="13" height="13"/><path d="M13.500 19L17 14L19.500 16.500L23 12"/>
<path d="M74 22.500V12.500H87V22.500zM74 16.500H87M77 12.500V9.500H84V12.500"/>
<rect x="136.500" y="10.500" width="4" height="5"/><rect x="136.500" y="17" width="4" height="5"/><rect x="143" y="10.500" width="4" height="11.500"/>
<path d="M202 10L197 16L202 22M209 10L204 16L209 22M206.500 11.500L203 16L206.500 20.500"/>
<path d="M262.500 11V21M262.500 13.500h-1.500v5h3v-5zM267.500 9V23M266 12h3v8h-3zM272.500 11V21M271 13.500h3v5h-3z"/>
<path d="M280 14.500L283 17.500L286 14.500M339 14.500L342 17.500L345 14.500M1379 14.500L1382.500 17.500L1386 14.500" stroke="#888"/>
<path d="M1112 12h3l1-2h4l1 2h3.500v10H1112zM1118.500 14.500a2.300 2.300 0 1 0 .1 0z" stroke="#777"/>
<path d="M1142 20L1143 16.500L1149.500 10L1152 12.500L1145.500 19zM1141 23H1153" stroke="#222"/>
<path d="M1173 11H1182V22H1177M1170 11H1172M1170 11V13M1170 19H1176M1173 16.500V22" stroke="#444"/>
<path d="M1200 11.500H1206M1200 16H1206M1200 20.500H1206M1209 11.500h1.500M1209 16h1.500M1209 20.500h1.500" stroke="#999"/>
<path d="M1262.500 9.500L1268.500 13V20L1262.500 23.500L1256.500 20V13zM1262.500 13.500a3 3 0 1 0 .1 0z" stroke="#777"/>
<path d="M1287 13V10H1290M1295 10H1298V13M1298 19V22H1295M1290 22H1287V19M1287.500 10.500L1290.500 13.500M1297.500 10.500L1294.500 13.500M1287.500 21.500L1290.500 18.500M1297.500 21.500L1294.500 18.500" stroke="#777"/>
<path d="M1323 22H1330.500A3.600 3.600 0 0 0 1331 14.800A5 5 0 0 0 1321.500 15A3.600 3.600 0 0 0 1323 22zM1324 17.500L1326 19.500L1329 16" stroke="#888"/>
<path d="M1475 13L1480 10M1475 17L1480 20" stroke="#222"/><circle cx="1473" cy="15" r="2.300" stroke="#222"/><circle cx="1481.500" cy="9" r="2.300" stroke="#222"/><circle cx="1481.500" cy="21" r="2.300" stroke="#222"/>
</g>
<g class="d">
<path d="M13.500 54L23.500 43.500"/><rect x="45" y="43" width="12" height="10.500"/><path d="M76 43.500H90M78 48.500H90M76 53.500H90"/>
<path d="M108 43.500L113 52L116 44M118 44V52M120 47a1.500 2.500 0 1 0 .1 0M123 47a1.500 2.500 0 1 0 .1 0" stroke-width="1"/>
<path d="M141 44.500H155M141 52.500H155M143 48.500H153M148 42V47M148 50V55"/>
</g>
<text x="172" y="52" font-size="12" fill="#222">Aa</text>
<circle cx="205" cy="48" r="1.600" fill="#222"/><circle cx="210" cy="48" r="1.600" fill="#222"/><circle cx="215" cy="48" r="1.600" fill="#222"/>
<path d="M234.500 40V57M425.500 40V57" stroke="#eeeff1"/>
<text x="255" y="56" font-size="15" fill="#f3c27b">主</text><text x="290" y="56" font-size="15" fill="#e9b949">大</text><text x="326" y="56" font-size="15" fill="#e9b949">筹</text>
<g class="d">
<path d="M366 45V43H376V54M375 42L376.500 43.500M376 56V58H366V47M367 59L365.500 57.500"/><path d="M368.500 54L373 47L375 49L370 55z" stroke-width="1"/>
<path d="M396 56L403 44M408 51l2.500 2.500-2.500 2.500-2.500-2.500z" />
<circle cx="404" cy="51" r="1.500" fill="#333"/>
<path d="M445 42H453M447.500 45H457V55L452.500 52L447.500 55z" stroke="#444"/>
<path d="M477 53L485 44L489.500 47.500L481.500 56z" stroke="#444"/><path d="M482 48L486 51.500" stroke="#444"/>
<path d="M508 55L517 44L520 47L511 56zM515 54C517 52 518 55 522 52" stroke="#444"/>
<path d="M541 44h3.500v9H541zM550 44h3.500v9H550zM542.500 41V56M551.500 41V56M544.500 48H550" stroke="#333"/>
<path d="M574.500 45H583.500V55H574.500zM577 45V42H581V45M579 48V52" stroke="#444"/>
<path d="M605.500 43H615V53M605.500 43V55H611M608 47H613M608 50H611M612 55L616 50L617.500 51.500L614 56z" stroke="#444" stroke-width="1"/>
<path d="M645 45C642 41.500 637 44 637.500 48L639 53C640.500 56.500 645 55.500 645 52L643 47C642 45.500 640 46.500 641 48.500L642.500 52M644 46L648 49.500L645 54" stroke="#444" stroke-width="1"/>
<path d="M668 42H682L677 49V58L673 55V49z" stroke="#333"/>
<path d="M701 45H712M703 45V55H710V45M704.500 45V42.500H708.500V45M705 48V52M708 48V52" stroke="#444"/>
</g>
</svg>
</body></html>
